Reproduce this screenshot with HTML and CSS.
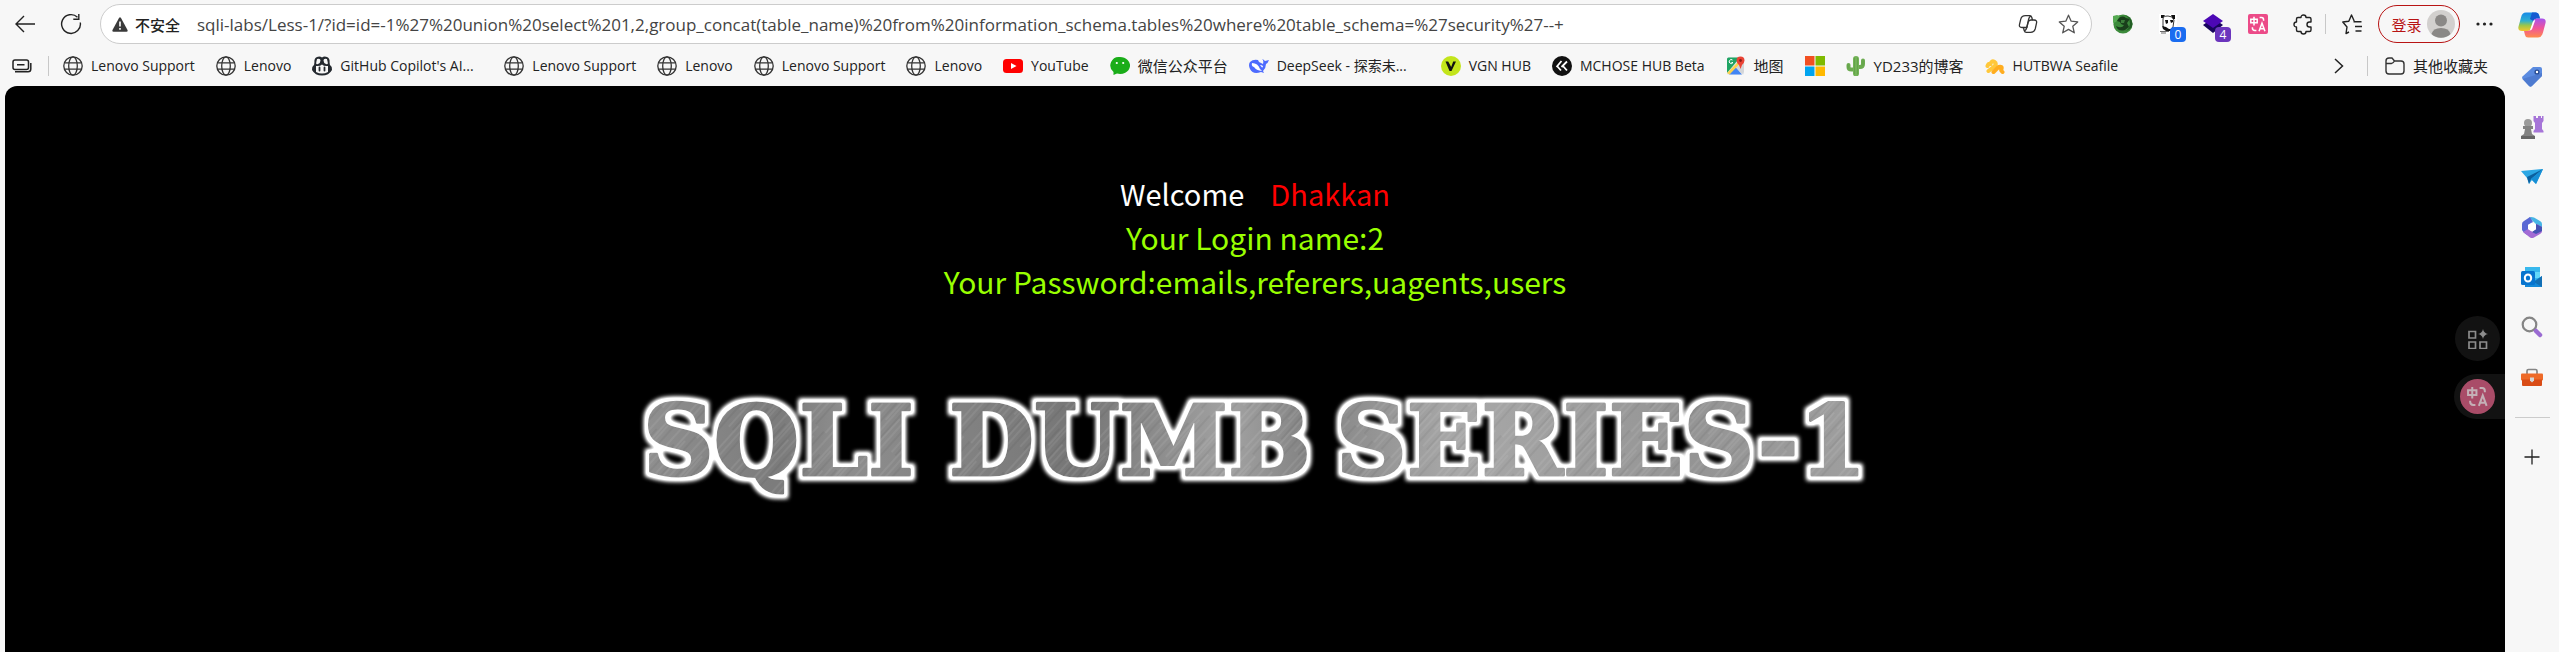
FILE: index.html
```html
<!DOCTYPE html>
<html lang="zh-CN">
<head>
<meta charset="utf-8">
<title>Less-1</title>
<link rel="stylesheet" href="styles.css">
</head>
<body>
<svg class="defs" aria-hidden="true">
  <symbol id="globe" viewBox="0 0 20 20"><g fill="none" stroke="#333" stroke-width="1.3"><circle cx="10" cy="10" r="9.2"/><ellipse cx="10" cy="10" rx="4.3" ry="9.2"/><path d="M1.6 6.8h16.8M1.6 13.2h16.8"/></g></symbol>
  <symbol id="translate" viewBox="0 0 20 20"><g fill="none" stroke="currentColor" stroke-width="1.9"><path d="M1 4h8v4.500H1zM5 1v11M12 2h2.500q2.500 0 2.500 3v1M3 14v1q0 3 3 3h2"/><path d="M11.300 19l3.700-10 3.700 10M12.500 16h5"/></g></symbol>
</svg>
<div class="browser">
  <div class="window">
    <header>
      <div class="toolbar">
        <button class="nav" aria-label="返回"><svg width="22" height="20" viewBox="0 0 22 20"><path d="M21 10H2M10 2L2 10l8 8" fill="none" stroke="#222" stroke-width="1.4"/></svg></button>
        <button class="nav" aria-label="刷新"><svg width="22" height="22" viewBox="0 0 22 22"><path d="M20.300 9.500A9.400 9.400 0 1 1 17.500 4.200M18.800 1v5.300h-5.500" fill="none" stroke="#222" stroke-width="1.4"/></svg></button>
        <form class="address">
          <svg width="16" height="15" viewBox="0 0 16 15"><path d="M7 1q1-1.600 2 0l6.500 12q.6 1.700-1 1.700H1.500q-1.600 0-1-1.700z" fill="#3a3a3a"/><path d="M8 4.500v5M8 11v1.800" stroke="#fff" stroke-width="1.600"/></svg>
          <label class="insecure" for="url">不安全</label>
          <input id="url" type="text" spellcheck="false" value="sqli-labs/Less-1/?id=id=-1%27%20union%20select%201,2,group_concat(table_name)%20from%20information_schema.tables%20where%20table_schema=%27security%27--+">
          <button type="button" class="small" aria-label="Copilot"><svg width="20" height="20" viewBox="0 0 20 20"><g fill="none" stroke="#333" stroke-width="1.300" stroke-linejoin="round"><path d="M7.500 1.700h4.200q1.600 0 2.100 1.800l.7 2.500h-1.700q-2 0-2.600 2.200l-1.400 5.300H4q-3.300 0-2.500-3.200l1.200-5q.9-3.600 4.800-3.600z"/><path d="M12.500 18.300H8.300q-1.600 0-2.100-1.800l-.7-2.500M14.500 6H16q3.300 0 2.500 3.200l-1.200 5.500q-.9 3.600-4.800 3.600M8.800 13.500L10.700 5q.5-2.300 2.300-2.800M8.800 13.500q-.6 2.500-2.300 3.500"/></g></svg></button>
          <button type="button" class="small" aria-label="收藏"><svg width="21" height="21" viewBox="0 0 21 21"><path d="M10.500 1.200l2.700 6 6.500.7-4.900 4.400 1.500 6.500-5.800-3.400-5.800 3.400 1.500-6.500L1.300 7.900l6.500-.7z" fill="none" stroke="#555" stroke-width="1.300" stroke-linejoin="round"/></svg></button>
        </form>
        <div class="extensions">
          <button aria-label="扩展 1"><svg width="20" height="20" viewBox="0 0 20 20"><circle cx="10" cy="10" r="9.600" fill="#3c8b3b"/><path d="M0 2l4-1 3 1-4 6-3 1z" fill="#55a952"/><path d="M4 7q4-7 9-3l4 1-3 4 2 4-4 3q-7 2-9-4 6 3 8-1-3 0-4-3z" fill="#193f1b"/><path d="M10 1q7 1 7 9-1 6-6 7 8-1 8.500-7Q19 2 10 1z" fill="#235d25"/><path d="M8 6h4l-1 3H8z" fill="#3b7d3a"/></svg></button>
          <button aria-label="扩展 2"><svg width="20" height="20" viewBox="0 0 20 20"><path d="M1 0h18v20H1z" fill="#fff"/><path d="M5 5Q5 2 10 2t6 4l-1 7-3 3H8l-3-4z" fill="#fff" stroke="#222" stroke-width=".9"/><path d="M3 1l4 0-2 3H3zM13 1h4v4h-2zM7 6h3v3l-2 1zM12 6h3v2l-2 1zM4 12l4 1 3 2h2v2H8l-3-2z" fill="#111"/><path d="M2 17.500h9M3 19h5" stroke="#444" stroke-width=".8"/></svg><span class="badge blue">0</span></button>
          <button aria-label="扩展 3"><svg width="22" height="22" viewBox="0 0 22 22"><path d="M1 12l10-7 10 7-10 8z" fill="#17055c"/><path d="M1 8L11 1l10 7-10 7z" fill="#4c08b5"/></svg><span class="badge purple">4</span></button>
          <button aria-label="翻译扩展"><span class="translate"><svg width="16" height="16"><use href="#translate"/></svg></span></button>
          <button aria-label="扩展"><svg width="20" height="21" viewBox="0 0 20 21"><path d="M6 3.500h2q0-2.500 2.500-2.500T13 3.500h3.500q1.500 0 1.500 1.500v3h-1.500Q14 8 14 10.500t2.500 2.500H18v3q0 1.500-1.500 1.500H13q0 2.500-2.500 2.500T8 17.500H5q-1.500 0-1.500-1.500v-3Q1 13 1 10.500T3.500 8V5q0-1.500 1.500-1.500z" fill="none" stroke="#222" stroke-width="1.400" stroke-linejoin="round"/></svg></button>
        </div>
        <span class="rule"></span>
        <button class="favs" aria-label="收藏夹"><svg width="21" height="21" viewBox="0 0 21 21"><path d="M11.500 7.800H19.500M13 12.500h7M13.500 17h6M7 18l-3 1.500 1-6.500L.8 8l6-.8L9.500 1l2.700 6" fill="none" stroke="#222" stroke-width="1.400" stroke-linejoin="round"/></svg></button>
        <button class="login">登录<svg width="28" height="28" viewBox="0 0 28 28"><circle cx="14" cy="14" r="14" fill="#d2d0ce"/><circle cx="14" cy="10.500" r="6" fill="#8a8886"/><path d="M4.500 24q1.500-6 9.500-6t9.500 6a14 14 0 0 1-19 0z" fill="#8a8886"/></svg></button>
        <button class="more" aria-label="更多"><svg width="17" height="4" viewBox="0 0 17 4"><g fill="#222"><circle cx="2" cy="2" r="1.600"/><circle cx="8.500" cy="2" r="1.600"/><circle cx="15" cy="2" r="1.600"/></g></svg></button>
      </div>
      <nav class="bookmarks" aria-label="收藏夹栏">
        <button class="tabs" aria-label="标签页操作"><svg width="20" height="14" viewBox="0 0 20 14"><g fill="none" stroke="#222" stroke-width="1.500"><rect x="1" y="1" width="15.500" height="9.500" rx="2"/><path d="M5 5.800h7.500M3 12.800h13q2.800 0 2.800-2.800V4"/></g></svg></button>
        <span class="rule"></span>
        <div class="links">
          <a href="#"><svg width="20" height="20"><use href="#globe"/></svg><span>Lenovo Support</span></a>
          <a href="#"><svg width="20" height="20"><use href="#globe"/></svg><span>Lenovo</span></a>
          <a href="#" class="long"><svg width="20" height="20" viewBox="0 0 20 20"><path d="M5 1q3-1 5 .6Q12 0 15 1q3 1 2.600 5.500Q17.500 9 19 10q1 .7 1 4-3 5.500-10 5.500T0 14q0-3.300 1-4 1.500-1 1.400-3.500Q2 2 5 1z" fill="#24292f"/><path d="M5 3q3.500-1 3.500 1.500T6 8 4.300 6 5 3zM15 3q-3.500-1-3.500 1.500T14 8t1.700-2T15 3zM4 10q4 .5 6-1.500 2 2 6 1.500v6q-6 3-12 0z" fill="#f7f7f7"/><path d="M7.500 11.500v3M12.500 11.500v3" stroke="#24292f" stroke-width="1.800" stroke-linecap="round"/></svg><span>GitHub Copilot's AI...</span></a>
          <a href="#"><svg width="20" height="20"><use href="#globe"/></svg><span>Lenovo Support</span></a>
          <a href="#"><svg width="20" height="20"><use href="#globe"/></svg><span>Lenovo</span></a>
          <a href="#"><svg width="20" height="20"><use href="#globe"/></svg><span>Lenovo Support</span></a>
          <a href="#"><svg width="20" height="20"><use href="#globe"/></svg><span>Lenovo</span></a>
          <a href="#"><svg width="20" height="20" viewBox="0 0 20 20"><rect y="3" width="20" height="14" rx="3.500" fill="red"/><path d="M8 7l5.500 3L8 13z" fill="#fff"/></svg><span>YouTube</span></a>
          <a href="#" class="cjk"><svg width="20" height="20" viewBox="0 0 20 20"><path d="M10 1a10 8.500 0 1 1-3 16.600L3.500 19v-3A8.500 8.500 0 0 1 10 1z" fill="#1aad19"/><circle cx="6.800" cy="7" r="1.100" fill="#fff"/><circle cx="13.200" cy="7" r="1.100" fill="#fff"/></svg><span>微信公众平台</span></a>
          <a href="#" class="long"><svg width="20" height="20" viewBox="0 0 20 20"><path d="M1 6q3-3 8-2l1 2 4 2q1-4-1-5 1 0 3 2l4-1q-1 3-3 4 0 4-3 7l1 2-3-1Q4 19 1 13-1 9 1 6z" fill="#4d6bfe"/><path d="M3 7q6 0 8 6l2 2q-6-.5-8-4-3-1-2-4zM11 9q3 0 3 2l-1 .5z" fill="#fff"/></svg><span>DeepSeek - 探索未...</span></a>
          <a href="#"><svg width="20" height="20" viewBox="0 0 20 20"><circle cx="10" cy="10" r="10" fill="#c3e51b"/><path d="M4.500 5.500h2.700l3 5.500 2-5.500H15L10.500 15H8.500z" fill="#111"/></svg><span>VGN HUB</span></a>
          <a href="#"><svg width="20" height="20" viewBox="0 0 20 20"><circle cx="10" cy="10" r="10" fill="#111"/><path d="M4.500 11L9.500 5M5 10l4 4.500M9.500 11l5.500-5.500M10.500 9.500l4.500 5" fill="none" stroke="#fff" stroke-width="1.800"/></svg><span>MCHOSE HUB Beta</span></a>
          <a href="#" class="cjk"><svg width="20" height="20" viewBox="0 0 20 20"><rect x="1" y="1.500" width="17" height="17" rx="1.500" fill="#dfe3e8"/><path d="M1 3q0-1.500 1.500-1.500H14L1 17z" fill="#1fa463"/><path d="M3 18.500l6.500-7.500 6.500 7.500z" fill="#4285f4"/><path d="M9.500 11L18 2.500V16l-2 2z" fill="#d4d6d9"/><path d="M1 17L14 4l1.500 2L3.500 18.500z" fill="#fbd34c"/><path d="M14.500.5a4 4 0 0 1 4 4q0 2-2.500 4.500L14.500 13 13 9q-2.500-2.500-2.500-4.500a4 4 0 0 1 4-4z" fill="#ea4335"/><circle cx="14.500" cy="4.500" r="1.400" fill="#8c1d18"/><path d="M6.500 4a2 2 0 1 0 .5 2.500H5.500" fill="none" stroke="#fff"/></svg><span>地图</span></a>
          <a href="#" aria-label="Microsoft"><svg width="20" height="20" viewBox="0 0 20 20"><path d="M0 0h9.500v9.500H0z" fill="#f25022"/><path d="M10.500 0H20v9.500h-9.500z" fill="#7fba00"/><path d="M0 10.500h9.500V20H0z" fill="#00a4ef"/><path d="M10.500 10.500H20V20h-9.500z" fill="#ffb900"/></svg></a>
          <a href="#" class="cjk"><svg width="20" height="20" viewBox="0 0 20 20"><g fill="none" stroke-linecap="round" stroke-linejoin="round"><path d="M2.500 9v2q0 2.500 3 2.500H9M17 4.500V8q0 3-3 3h-3" stroke="#6cab50" stroke-width="4"/><path d="M10 3v14.500" stroke="#73b357" stroke-width="6"/><path d="M8.500 2v16M11.500 2v16M2 9v3M17 5v4" stroke="#5d9e45" stroke-width=".7"/></g></svg><span>YD233的博客</span></a>
          <a href="#"><svg width="20" height="20" viewBox="0 0 20 20"><g fill="none" stroke-width="4" stroke-linecap="round" stroke-linejoin="round"><path d="M2.500 10q1-3 3-2 1-4 4-2 3 2-1 5l-5 4" stroke="#ffc83a"/><path d="M8.500 16l5-5q4-1 3 2-1 1.500 1 3" stroke="#ffad1f"/></g></svg><span>HUTBWA Seafile</span></a>
        </div>
        <button class="chevron" aria-label="更多收藏"><svg width="10" height="16" viewBox="0 0 10 16"><path d="M1 1l7.500 7L1 15" fill="none" stroke="#222" stroke-width="1.500"/></svg></button>
        <span class="rule"></span>
        <a class="folder" href="#"><svg width="20" height="18" viewBox="0 0 20 18"><path d="M1 4q0-3 3-3h3l2.500 3H16q3 0 3 3v7q0 3-3 3H4q-3 0-3-3zM1 6.500h5.500Q8 6.500 9.500 4" fill="none" stroke="#333" stroke-width="1.400"/></svg><span>其他收藏夹</span></a>
      </nav>
    </header>
    <main class="page">
      <div class="message">
        <p class="welcome">Welcome&nbsp;&nbsp;&nbsp; <span class="name">Dhakkan</span></p>
        <p>Your Login name:2</p>
        <p>Your Password:emails,referers,uagents,users</p>
      </div>
      <h1 class="banner">
        <svg viewBox="0 0 1250 140">
          <defs>
            <linearGradient id="steel" gradientUnits="userSpaceOnUse" x1="0" y1="60" x2="1250" y2="100"><stop offset="0" stop-color="#929292"/><stop offset=".12" stop-color="#7b7b7b"/><stop offset=".17" stop-color="#8e8e8e"/><stop offset=".36" stop-color="#767676"/><stop offset=".48" stop-color="#a2a2a2"/><stop offset=".54" stop-color="#838383"/><stop offset=".66" stop-color="#a8a8a8"/><stop offset=".85" stop-color="#949494"/><stop offset="1" stop-color="#a0a0a0"/></linearGradient>
            <pattern id="brushed" patternUnits="userSpaceOnUse" width="1250" height="140"><rect width="1250" height="140" fill="url(#steel)"/><rect width="1250" height="140" fill="url(#scratches)"/></pattern>
            <pattern id="scratches" patternUnits="userSpaceOnUse" width="23" height="90" patternTransform="rotate(42)"><path d="M3 0v90M14 10v50" stroke="#fff" stroke-opacity=".14"/><path d="M8 20v70M19 0v60" stroke="#000" stroke-opacity=".1"/><path d="M11 0v40M21 30v60" stroke="#fff" stroke-opacity=".08" stroke-width="2"/></pattern>
            <filter id="halo" filterUnits="userSpaceOnUse" x="0" y="0" width="1250" height="140">
              <feMorphology in="SourceAlpha" operator="dilate" radius="4" result="wide"/>
              <feGaussianBlur in="wide" stdDeviation="2" result="soft"/>
              <feComponentTransfer in="soft" result="glow"><feFuncR type="linear" slope="0" intercept="1"/><feFuncG type="linear" slope="0" intercept="1"/><feFuncB type="linear" slope="0" intercept="1"/><feFuncA type="linear" slope="1.400"/></feComponentTransfer>
              <feMerge><feMergeNode in="glow"/><feMergeNode in="SourceGraphic"/></feMerge>
            </filter>
          </defs>
          <text y="97" class="banner-text" fill="url(#brushed)" stroke="url(#brushed)" filter="url(#halo)"><tspan x="13">SQLI</tspan> <tspan x="319">DUMB</tspan> <tspan x="706">SERIES-1</tspan></text>
        </svg>
      </h1>
      <div class="floating">
        <button class="grid-button" aria-label="工具"><svg width="20" height="20" viewBox="0 0 20 20"><g fill="none" stroke="#8c8c8c" stroke-width="1.700"><path d="M1 2.500h6.500V9H1zM1 13h6.500v6.500H1zM12 13h6.500v6.500H12z"/></g><path d="M15 0q.8 4.200 5 5-4.200.8-5 5-.8-4.200-5-5 4.200-.8 5-5z" fill="#8c8c8c"/></svg></button>
        <button class="translate-tab" aria-label="翻译"><span><svg width="21" height="21"><use href="#translate"/></svg></span></button>
      </div>
    </main>
  </div>
  <aside class="sidebar">
    <button class="copilot" aria-label="Copilot"><svg width="28" height="28" viewBox="0 0 28 28"><defs><linearGradient id="c1" x2="0" y2="1"><stop stop-color="#168be8"/><stop offset=".45" stop-color="#2fb0d0"/><stop offset=".7" stop-color="#9ac64a"/><stop offset="1" stop-color="#f5c62c"/></linearGradient><linearGradient id="c2" x2="0" y2="1"><stop stop-color="#a653ee"/><stop offset=".5" stop-color="#f0549b"/><stop offset="1" stop-color="#ff8a4a"/></linearGradient></defs><path d="M8 1.500h10q2.500 0 3 2.500l1 3.500h-3.500q-2.500 0-3.200 2.500L13 17.500q-.8 2.500-3.500 2.500H4q-4.500 0-3.500-4.500l2.500-9Q4 1.500 8 1.500z" fill="url(#c1)"/><path d="M14 1.500h4q2.500 0 3 2.500l1 3.500h-3.500q-2.500 0-3.200 2.500L12 8z" fill="#155bd1"/><path d="M20 26.500H10q-2.500 0-3-2.500l-1-4h3.500q2.700 0 3.500-2.500L15.300 10q.7-2.500 3.200-2.500H24q4.500 0 3.500 4.500l-2.500 9.500q-1 5-5 5z" fill="url(#c2)"/><path d="M14.800 11q.6-2 2.500-2l-3 8.500q-.6 2-2.500 2z" fill="#fff"/></svg></button>
    <button aria-label="购物"><svg width="22" height="22" viewBox="0 0 22 22"><path d="M12 1h7q2 0 2 2v7l-10 10q-1.500 1.500-3 0L1.500 13q-1-1.500 0-2.500z" fill="#5b8be0"/><path d="M21 7v3L11 20q-1.500 1.500-3 0L1.500 13z" fill="#4672c4" opacity=".6"/><circle cx="16" cy="6" r="1.900" fill="#fff" stroke="#294d92" stroke-width="1.400"/></svg></button>
    <button aria-label="游戏"><svg width="24" height="24" viewBox="0 0 24 24"><path d="M14 1h2v2h2V1h3v2h1V1h1.500v5L22 8v6l1.500 2v1.500h-10V16l1.500-2V8l-1.500-2V1z" fill="#a675d8"/><circle cx="8" cy="8" r="4" fill="#9b9b9b"/><path d="M3 11h10v3h-2l1 5 3 2v3H1v-3l3-2 1-5H3z" fill="#838383"/><path d="M1 21h14v3H1z" fill="#666"/></svg></button>
    <button aria-label="拖放"><svg width="22" height="18" viewBox="0 0 22 18"><path d="M0 3l22-2-7 15-4-4-3 4-2-6z" fill="#2ca7e4"/><path d="M22 1L6 9l2 7 2-5z" fill="#0b5f9e"/><path d="M10 11L22 1l-7 15z" fill="#168ed5"/></svg></button>
    <button aria-label="Microsoft 365"><svg width="22" height="22" viewBox="0 0 22 22"><path d="M8 1.500q2-1.200 5 0l6 3.500q2 1 2 3v6l-6-3V8z" fill="#46b5e5"/><path d="M1 8q0-2 2-3l6-4 3 5-4 3v10q-4 0-7-5z" fill="#5967d4"/><path d="M2 16l5-3 5 3 4-3V8l5 3v4q0 2-2 3l-6 3.500q-2 1-4 0z" fill="#a36bd4"/><path d="M15 8l6 3v4l-6 3-4-2 4-3z" fill="#4652b4"/><path d="M11 6.500l4 2.300v4.400l-4 2.300-4-2.300V8.800z" fill="#fff"/></svg></button>
    <button aria-label="Outlook"><svg width="22" height="22" viewBox="0 0 22 22"><path d="M4 1h15v14H4z" fill="#38b8ed"/><path d="M12 6h7v6h-7z" fill="#62d8fa"/><path d="M4 11l9 4 8-5v11H4z" fill="#1489d8"/><path d="M21 10v11l-8-5z" fill="#126fb5"/><rect x="0" y="5" width="14" height="14" rx="1.500" fill="#0875cf"/><ellipse cx="7" cy="12" rx="3.200" ry="3.600" fill="none" stroke="#fff" stroke-width="2"/></svg></button>
    <button aria-label="搜索"><svg width="22" height="22" viewBox="0 0 22 22"><circle cx="8.500" cy="8.500" r="6.800" fill="#f7f7f7" stroke="#858585" stroke-width="2.200"/><path d="M15 15l4 4" stroke="#9a6bd2" stroke-width="4.500" stroke-linecap="round"/></svg></button>
    <button aria-label="工具箱"><svg width="24" height="18" viewBox="0 0 24 18"><path d="M7 6V3q0-1.500 1.500-1.500h7Q17 1.500 17 3v3" fill="none" stroke="#858585" stroke-width="1.700"/><rect x="1" y="5.500" width="22" height="7" rx="1" fill="#ee6a28"/><path d="M2 11.500h20V17q0 1-1 1H3q-1 0-1-1z" fill="#d94c16"/><path d="M10 9.500h4v3l-2 2-2-2z" fill="#d5d5d5"/></svg></button>
    <hr>
    <button aria-label="自定义"><svg width="16" height="16" viewBox="0 0 16 16"><path d="M8 .5v15M.5 8h15" stroke="#222" stroke-width="1.300"/></svg></button>
  </aside>
</div>
</body>
</html>
```
FILE: styles.css
```css
* { box-sizing: border-box; }
body { margin: 0; background: #f7f7f7; color: #222; font-family: "Open Sans", "Noto Sans CJK SC", sans-serif; font-size: 14px; }
button { display: flex; align-items: center; justify-content: center; padding: 0; border: 0; background: none; color: inherit; font: inherit; }
a { color: inherit; text-decoration: none; }
svg { display: block; flex: none; }
.defs { position: absolute; width: 0; height: 0; }

.browser { display: flex; min-height: 100vh; }
.window { flex: 1; min-width: 0; display: flex; flex-direction: column; }

.toolbar { display: flex; align-items: center; padding: 4px 0 0 2px; height: 44px; }
.nav { width: 46px; height: 40px; }
.address { flex: 1; min-width: 0; display: flex; align-items: center; height: 40px; margin: 0 8px 0 6px; padding: 0 3px 0 11px; border: 1px solid #ccc; border-radius: 20px; background: #fff; }
.insecure { margin: 0 17px 0 7px; font-size: 15px; font-weight: 500; font-family: "Noto Sans CJK SC", sans-serif; }
.address input { flex: 1; min-width: 0; padding: 0; border: 0; outline: 0; background: none; color: #444; font: 17px "Open Sans", sans-serif; }
.small { width: 40px; height: 36px; }
.extensions { display: flex; }
.extensions button { position: relative; width: 45px; height: 40px; }
.badge { position: absolute; left: 25px; top: 23px; width: 16px; height: 15px; border-radius: 4px; color: #fff; font-size: 12px; line-height: 15px; text-align: center; }
.blue { background: #1a6cf0; }
.purple { background: #6b35bd; }
.translate { display: grid; place-items: center; width: 20px; height: 20px; border-radius: 2px; background: #ec4b88; color: #fff; }
.rule { flex: none; width: 1px; height: 20px; background: #c8c8c8; }
.favs { width: 52px; height: 40px; }
.login { gap: 5px; width: 82px; height: 38px; padding-left: 8px; border: 1px solid #b81414; border-radius: 19px; color: #b81414; font-size: 15px; }
.more { width: 45px; height: 38px; padding-left: 4px; }

.bookmarks { display: flex; align-items: center; height: 42px; padding: 2px 17px 0 12px; }
.tabs { width: 20px; margin-right: 16px; }
.links { flex: 1; display: flex; gap: 21px; margin-left: 14px; white-space: nowrap; }
.links a, .folder { display: flex; align-items: center; gap: 8px; line-height: 20px; }
.links .long { width: 171px; }
.links .cjk, .folder { font-size: 15px; }
.chevron { width: 24px; margin-right: 16px; }
.folder { margin-left: 17px; }

.page { position: relative; flex: 1; margin-left: 5px; padding-top: 85px; border-radius: 12px 12px 0 0; background: #000; }
.message { color: #9f0; font: 30px/44px "Noto Sans CJK SC", sans-serif; text-align: center; }
.message p { margin: 0; }
.message .welcome { color: #fff; font-size: 29px; }
.name { color: red; }
.banner { width: 1250px; max-width: 100%; margin: 75px auto 0; }
.banner svg { width: 100%; }
.banner-text { font: bold 98px "DejaVu Serif", serif; stroke-width: 3px; stroke-linejoin: round; }
.floating { position: absolute; right: 0; top: 230px; display: flex; flex-direction: column; align-items: flex-end; gap: 13px; }
.grid-button { width: 45px; height: 45px; margin-right: 5px; border-radius: 50%; background: #121212; }
.translate-tab { width: 51px; height: 45px; padding-right: 4px; border-radius: 23px 0 0 23px; background: #121212; }
.translate-tab span { display: grid; place-items: center; width: 35px; height: 35px; border-radius: 50%; background: #a94c68; color: #c4b0b6; }

.sidebar { flex: none; width: 54px; display: flex; flex-direction: column; align-items: center; }
.sidebar button { width: 40px; height: 50px; }
.sidebar .copilot { margin-bottom: 2px; }
.sidebar hr { width: 35px; margin: 15px 0 14px; border: 0; border-top: 1px solid #ccc; }
```
